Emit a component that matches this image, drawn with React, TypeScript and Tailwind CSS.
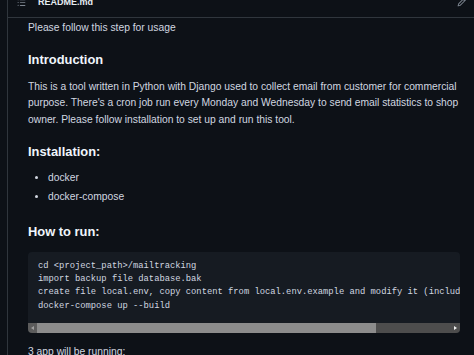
export default function App() {
  const code = [
    "cd <project_path>/mailtracking",
    "import backup file database.bak",
    "create file local.env, copy content from local.env.example and modify it (include your credentials)",
    "docker-compose up --build",
  ];

  return (
    <div className="h-[355px] w-[474px] overflow-hidden bg-[#0d1117] font-['Liberation_Sans',Arial,sans-serif]">
      <div className="ml-[7px] h-full border-l border-[#30363d]">
        {/* file header, scrolled half out of view */}
        <div className="h-[18px] overflow-hidden border-b border-[#30363d]">
          <div className="-mt-[4px] flex h-[12px] items-center pl-[9px] pr-[7px]">
            <svg viewBox="0 0 16 16" className="h-[9px] w-[9px] fill-[#7d8590]">
              <path d="M5.75 2.5h8.5a.75.75 0 0 1 0 1.5h-8.5a.75.75 0 0 1 0-1.5Zm0 5h8.5a.75.75 0 0 1 0 1.5h-8.5a.75.75 0 0 1 0-1.5Zm0 5h8.5a.75.75 0 0 1 0 1.5h-8.5a.75.75 0 0 1 0-1.5ZM2 14a1 1 0 1 1 0-2 1 1 0 0 1 0 2Zm1-6a1 1 0 1 1-2 0 1 1 0 0 1 2 0ZM2 4a1 1 0 1 1 0-2 1 1 0 0 1 0 2Z" />
            </svg>
            <span className="ml-[12px] text-[9px] font-bold leading-[12px] text-[#e6edf3]">README.md</span>
            <div className="flex-1" />
            <svg viewBox="0 0 16 16" className="h-[10px] w-[10px] fill-[#7d8590]">
              <path d="M11.013 1.427a1.75 1.75 0 0 1 2.474 0l1.086 1.086a1.75 1.75 0 0 1 0 2.474l-8.61 8.61c-.21.21-.47.364-.756.445l-3.251.93a.75.75 0 0 1-.927-.928l.929-3.25c.081-.286.235-.547.445-.758l8.61-8.61Zm.176 4.823L9.75 4.81l-6.286 6.287a.253.253 0 0 0-.064.108l-.558 1.953 1.953-.558a.253.253 0 0 0 .108-.064Zm1.238-3.763a.25.25 0 0 0-.354 0L10.811 3.75l1.439 1.44 1.263-1.263a.25.25 0 0 0 0-.354Z" />
            </svg>
          </div>
        </div>

        {/* markdown body */}
        <div className="flex flex-col pl-[20px] pr-[10px] text-[10.3px] leading-[16.5px] text-[#d1d7e0]">
          <p className="mt-[2px]">Please follow this step for usage</p>

          <h3 className="mt-[15px] text-[12.9px] font-bold leading-[16px] text-[#f0f6fc]">Introduction</h3>
          <p className="mt-[11px]">
            This is a tool written in Python with Django used to collect email from customer for commercial
            purpose. There's a cron job run every Monday and Wednesday to send email statistics to shop
            owner. Please follow installation to set up and run this tool.
          </p>

          <h3 className="mt-[16px] text-[12.9px] font-bold leading-[16px] text-[#f0f6fc]">Installation:</h3>
          <ul className="mt-[10px] list-disc pl-[20px]">
            <li>docker</li>
            <li className="mt-[2.5px]">docker-compose</li>
          </ul>

          <h3 className="mt-[18px] text-[12.9px] font-bold leading-[16px] text-[#f0f6fc]">How to run:</h3>

          <div className="mr-[4px] mt-[12px] overflow-hidden rounded-[4px] bg-[#161b22]">
            <pre className="overflow-hidden whitespace-pre px-[10px] pb-[10px] pt-[8px] font-['Liberation_Mono','Courier_New',monospace] text-[8.8px] leading-[13.4px] text-[#d1d7e0]">
              {code.join("\n")}
            </pre>
            <div className="flex h-[10px]">
              <div className="flex w-[9px] items-center justify-center bg-[#5c5c5c]">
                <div className="h-0 w-0 border-y-[2px] border-r-[3px] border-y-transparent border-r-[#a0a0a0]" />
              </div>
              <div className="w-[339px] bg-[#8c8c8c]" />
              <div className="flex-1 bg-[#4d4d4d]" />
              <div className="flex w-[9px] items-center justify-center bg-[#4d4d4d]">
                <div className="h-0 w-0 border-y-[2.5px] border-l-[3px] border-y-transparent border-l-[#f0f0f0]" />
              </div>
            </div>
          </div>

          <p className="mt-[11px]">3 app will be running:</p>
        </div>
      </div>
    </div>
  );
}
